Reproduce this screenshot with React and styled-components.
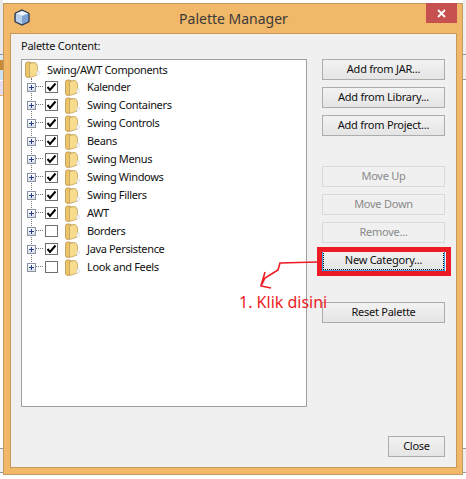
import React from 'react';
import styled, { createGlobalStyle } from 'styled-components';

const GlobalStyle = createGlobalStyle`
  html, body {
    margin: 0;
    padding: 0;
    background: #fff;
  }
`;

// the desktop only shows as thin strips left and right of the dialog
const Screen = styled.div`
  position: relative;
  width: 466px;
  height: 479px;
  padding: 3px 3px 4px 3px;
  box-sizing: border-box;
  overflow: hidden;
  font-family: "Noto Sans", sans-serif;
  font-size: 11px;
  color: #111;
  background:
    linear-gradient(to bottom, #e9e9e9 0 54px, #8e98a4 54px 55px, #dce8f4 55px 60px, #c98a3c 60px 70px, #cfe0f0 70px 80px, #fff 80px 81px, #e5dcf0 81px 95px, #f0b060 95px 96px, #fff 96px 448px, #999 448px 449px, #eee 449px 472px, #999 472px 473px, #fff 473px) left top / 3px 100% no-repeat,
    linear-gradient(to bottom, #eee 0 54px, #8e98a4 54px 55px, #eee 55px 79px, #8e98a4 79px 80px, #fff 80px 448px, #999 448px 449px, #eee 449px 472px, #999 472px 473px, #fff 473px) right top / 3px 100% no-repeat,
    #fff;
`;

const Frame = styled.div`
  display: flex;
  flex-direction: column;
  height: 100%;
  box-sizing: border-box;
  padding: 0 5px 6px 6px;
  background: #f0b868;
  border: 1px solid #c29a5e;
`;

const TitleBar = styled.div`
  position: relative;
  display: flex;
  align-items: center;
  justify-content: center;
  height: 29px;
  flex-shrink: 0;
  font-size: 14px;
  color: #3a3a3a;
`;

const AppIcon = styled.svg`
  position: absolute;
  left: 4px;
  top: 5px;
`;

const CloseX = styled.div`
  position: absolute;
  right: 0;
  top: -1px;
  width: 31px;
  height: 20px;
  display: flex;
  align-items: center;
  justify-content: center;
  background: #c75050;
`;

const Panel = styled.div`
  flex: 1;
  display: flex;
  flex-direction: column;
  padding: 5px 11px 10px 10px;
  background: #f0f0f0;
  border: 1px solid #c89a55;
  min-height: 0;
`;

const PanelLabel = styled.div`
  height: 20px;
  line-height: 14px;
  letter-spacing: -0.25px;
`;

const Columns = styled.div`
  flex: 1;
  display: flex;
  gap: 15px;
  min-height: 0;
`;

const TreeBox = styled.div`
  position: relative;
  width: 286px;
  height: 348px;
  box-sizing: border-box;
  padding: 0 0 0 3px;
  background: #fff;
  border: 1px solid #a0a0a0;
  letter-spacing: -0.35px;
`;

const TreeLine = styled.div`
  position: absolute;
  left: 9px;
  top: 18px;
  height: 186px;
  border-left: 1px dotted #777;
`;

const RootRow = styled.div`
  display: flex;
  align-items: center;
  height: 17px;
  padding-top: 1px;
  box-sizing: border-box;
`;

const Row = styled.div`
  display: flex;
  align-items: center;
  height: 18px;
`;

const RootName = styled.span`
  margin-left: 7px;
`;

const Expander = styled.span`
  position: relative;
  width: 9px;
  height: 9px;
  margin: 2px 0 0 2px;
  box-sizing: border-box;
  flex-shrink: 0;
  background: linear-gradient(#fff, #d8dce4);
  border: 1px solid #8a94a8;
  &::before {
    content: "";
    position: absolute;
    left: 1px;
    top: 3px;
    width: 5px;
    height: 1px;
    background: #2a3f8a;
  }
  &::after {
    content: "";
    position: absolute;
    left: 3px;
    top: 1px;
    width: 1px;
    height: 5px;
    background: #2a3f8a;
  }
`;

const Dots = styled.span`
  width: 7px;
  margin: 0 2px 0 0;
  flex-shrink: 0;
  border-top: 1px dotted #777;
`;

const CheckBox = styled.span`
  display: flex;
  align-items: center;
  justify-content: center;
  width: 13px;
  height: 12px;
  margin-top: 1px;
  box-sizing: border-box;
  flex-shrink: 0;
  background: #fff;
  border: 1px solid #707070;
`;

const ItemFolder = styled.span`
  display: flex;
  margin: 2px 7px 0 7px;
`;

const ButtonColumn = styled.div`
  display: flex;
  flex-direction: column;
  width: 123px;
`;

const Btn = styled.div`
  display: flex;
  align-items: center;
  justify-content: center;
  height: 21px;
  padding-bottom: 2px;
  box-sizing: border-box;
  flex-shrink: 0;
  letter-spacing: -0.25px;
  margin-top: ${(p) => p.$top || 0}px;
  background: ${(p) => (p.$off ? '#f0f0f0' : 'linear-gradient(#f2f2f2, #e5e5e5)')};
  border: 1px solid ${(p) => (p.$off ? '#d9d9d9' : '#acacac')};
  color: ${(p) => (p.$off ? '#8a8a8a' : '#111')};
`;

const FocusBtn = styled(Btn)`
  border-color: #3c9ee8;
  outline: 1px dotted #111;
  outline-offset: -2px;
`;

const CloseBtn = styled(Btn)`
  width: 57px;
  align-self: flex-end;
  margin-top: auto;
`;

const RedBox = styled.div`
  position: absolute;
  left: 317px;
  top: 247px;
  width: 134px;
  height: 29px;
  box-sizing: border-box;
  border: 5px solid #ed1c24;
`;

const Arrow = styled.svg`
  position: absolute;
  left: 255px;
  top: 258px;
`;

const Note = styled.div`
  position: absolute;
  left: 239px;
  top: 292px;
  font-size: 16px;
  line-height: 20px;
  color: #ed1c24;
`;

const FolderIcon = () => (
  <svg width="15" height="17" viewBox="0 0 15 17" style={{ flexShrink: 0 }}>
    <path d="M0.5 3 Q0.5 1 2.5 1 L5 1 L6 2 L9 2 L9 14 L3 16.5 Q0.5 16.5 0.5 14 Z" fill="#eec46a" stroke="#b8944a" strokeWidth="0.8" />
    <path d="M4.5 2.5 L10 1.5 Q12.5 2.5 12.5 6 L12.5 12.5 Q12.5 14.5 9.5 15 L4.5 16.5 Z" fill="#f8dc8e" stroke="#c2a055" strokeWidth="0.8" />
    <path d="M12.5 9.5 Q15 10 14.5 12.5 Q13.5 14.5 11.5 14 Z" fill="#fff" stroke="#cfcfcf" strokeWidth="0.7" />
  </svg>
);

const Check = () => (
  <svg width="11" height="10" viewBox="0 0 11 10">
    <path d="M1.5 5 L4 8 L9.5 1.5" fill="none" stroke="#000" strokeWidth="2" />
  </svg>
);

const items = [
  { name: 'Kalender', on: true },
  { name: 'Swing Containers', on: true },
  { name: 'Swing Controls', on: true },
  { name: 'Beans', on: true },
  { name: 'Swing Menus', on: true },
  { name: 'Swing Windows', on: true },
  { name: 'Swing Fillers', on: true },
  { name: 'AWT', on: true },
  { name: 'Borders', on: false },
  { name: 'Java Persistence', on: true },
  { name: 'Look and Feels', on: false },
];

const App = () => {
  return (
    <Screen>
      <GlobalStyle />
      <Frame>
        <TitleBar>
          <AppIcon width="16" height="17" viewBox="0 0 16 17">
            <path d="M8 1 L14.5 4 Q15 4.3 15 5 L15 12 Q15 12.7 14.5 13 L8 16 L1.5 13 Q1 12.7 1 12 L1 5 Q1 4.3 1.5 4 Z" fill="#7fa4d4" stroke="#2a3a50" strokeWidth="1.3" />
            <path d="M8 2 L14 4.5 L8 7 L2 4.5 Z" fill="#eef4fa" />
            <path d="M8 7 L8 15 L2 12.3 L2 4.5 Z" fill="#bcd2ea" />
          </AppIcon>
          Palette Manager
          <CloseX>
            <svg width="9" height="9" viewBox="0 0 9 9">
              <path d="M1 1 L8 8 M8 1 L1 8" stroke="#fff" strokeWidth="1.8" />
            </svg>
          </CloseX>
        </TitleBar>
        <Panel>
          <PanelLabel>Palette Content:</PanelLabel>
          <Columns>
            <TreeBox>
              <TreeLine />
              <RootRow>
                <FolderIcon />
                <RootName>Swing/AWT Components</RootName>
              </RootRow>
              {items.map((item) => (
                <Row key={item.name}>
                  <Expander />
                  <Dots />
                  <CheckBox>{item.on && <Check />}</CheckBox>
                  <ItemFolder><FolderIcon /></ItemFolder>
                  {item.name}
                </Row>
              ))}
            </TreeBox>
            <ButtonColumn>
              <Btn>Add from JAR...</Btn>
              <Btn $top={7}>Add from Library...</Btn>
              <Btn $top={7}>Add from Project...</Btn>
              <Btn $off $top={30}>Move Up</Btn>
              <Btn $off $top={7}>Move Down</Btn>
              <Btn $off $top={7}>Remove...</Btn>
              <FocusBtn $top={7}>New Category...</FocusBtn>
              <Btn $top={31}>Reset Palette</Btn>
              <CloseBtn>Close</CloseBtn>
            </ButtonColumn>
          </Columns>
        </Panel>
      </Frame>
      <RedBox />
      <Arrow width="63" height="32" viewBox="0 0 63 32">
        <path d="M62 4 L25 5 L23 12 L10 20 L6 28 M10 14 L6 28 L16 30" fill="none" stroke="#ed1c24" strokeWidth="1.6" />
      </Arrow>
      <Note>1. Klik disini</Note>
    </Screen>
  );
};

export default App;
